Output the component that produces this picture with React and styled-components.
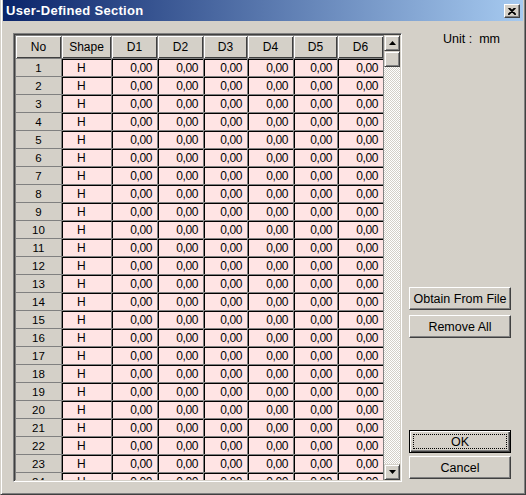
import styled, { createGlobalStyle } from 'styled-components'

const GlobalStyle = createGlobalStyle`
  html, body { margin: 0; padding: 0; background: #d4d0c8; }
  body { font-family: "Liberation Sans", Arial, sans-serif; font-size: 12px; color: #000; }
`

const Window = styled.div`
  box-sizing: border-box;
  width: 526px;
  height: 495px;
  display: flex;
  flex-direction: column;
  background: #d4d0c8;
  border: 1px solid;
  border-color: #d4d0c8 #404040 #404040 #d4d0c8;
  border-top: 0;
  box-shadow: inset 1px 0 #fff, inset -1px -1px #808080;
  padding: 0 2px 2px 2px;
  overflow: hidden;
`
const TitleBar = styled.div`
  height: 21px;
  flex: none;
  display: flex;
  align-items: center;
  justify-content: space-between;
  padding: 0 3px 0 3px;
  background: linear-gradient(to right, #0a246a, #a6caf0);
`
const Title = styled.span`
  color: #fff;
  font-weight: bold;
  font-size: 13px;
  letter-spacing: 0.3px;
`
const CloseButton = styled.div`
  box-sizing: border-box;
  width: 16px;
  height: 14px;
  margin-top: 1px;
  display: flex;
  align-items: center;
  justify-content: center;
  background: #d4d0c8;
  border: 1px solid;
  border-color: #fff #404040 #404040 #fff;
  box-shadow: inset -1px -1px #808080;
`
const Body = styled.div`
  flex: 1;
  display: flex;
  padding: 12px 12px 10px 10px;
  min-height: 0;
`
const Frame = styled.div`
  box-sizing: border-box;
  width: 389px;
  height: 449px;
  display: flex;
  padding: 1px;
  border: 1px solid;
  border-color: #808080 #fff #fff #808080;
  box-shadow: inset 1px 1px #404040, inset -1px -1px #d4d0c8;
`
const GridArea = styled.div`
  flex: 1;
  overflow: hidden;
  background: #808080;
  padding: 1px 1px 0 1px;
`
const Table = styled.div`
  display: grid;
  grid-template-columns: 45px 49px 45px 45px 43px 45px 43px 45px;
  grid-template-rows: 22px;
  grid-auto-rows: 17px;
  gap: 1px;
`
const HeadCell = styled.div`
  display: flex;
  align-items: center;
  justify-content: center;
  background: #d4d0c8;
  box-shadow: inset 1px 1px #fff, inset -1px -1px #404040;
  font-size: 12px;
`
const NoCell = styled.div`
  display: flex;
  align-items: center;
  justify-content: center;
  background: #d4d0c8;
  font-size: 11.5px;
`
const EditCell = styled.div`
  box-sizing: border-box;
  display: flex;
  align-items: center;
  justify-content: ${p => (p.$left ? 'flex-start' : 'flex-end')};
  padding: ${p => (p.$left ? '0 0 0 14px' : '0 5px 0 0')};
  background: #ffe4e4;
  border-top: 1px solid #000;
  border-left: 1px solid #000;
  font-size: 12px;
  letter-spacing: ${p => (p.$left ? '0' : '-0.4px')};
`
const ScrollBar = styled.div`
  width: 16px;
  flex: none;
  display: flex;
  flex-direction: column;
  background: repeating-conic-gradient(#d4d0c8 0 25%, #fff 0 50%) 0 0 / 2px 2px;
`
const ScrollPart = styled.div`
  box-sizing: border-box;
  width: 16px;
  height: 16px;
  display: flex;
  align-items: center;
  justify-content: center;
  background: #d4d0c8;
  border: 1px solid;
  border-color: #d4d0c8 #404040 #404040 #d4d0c8;
  box-shadow: inset 1px 1px #fff, inset -1px -1px #808080;
`
const Track = styled.div`
  flex: 1;
`
const SidePanel = styled.div`
  width: 102px;
  margin-left: 7px;
  display: flex;
  flex-direction: column;
  padding-bottom: 3px;
`
const UnitLabel = styled.div`
  text-align: right;
  padding-right: 11px;
  line-height: 12px;
  font-size: 12.5px;
`
const Button = styled.div`
  box-sizing: border-box;
  height: 23px;
  display: flex;
  align-items: center;
  justify-content: center;
  margin-top: ${p => p.$gap || '0'};
  background: #d4d0c8;
  border: 1px solid;
  border-color: #fff #404040 #404040 #fff;
  box-shadow: inset -1px -1px #808080;
  font-size: 12.5px;
`
const DefaultButton = styled(Button)`
  padding: 3px;
  border-color: #000;
  box-shadow: inset 1px 1px #fff, inset -1px -1px #404040, inset -2px -2px #808080;
`
const FocusRing = styled.span`
  flex: 1;
  align-self: stretch;
  display: flex;
  align-items: center;
  justify-content: center;
  border: 1px dotted #000;
`

const heads = ['No', 'Shape', 'D1', 'D2', 'D3', 'D4', 'D5', 'D6']
const rows = Array.from({ length: 24 }, (_, i) => i + 1)

const Arrow = ({ down }) => (
  <svg width="7" height="4" viewBox="0 0 7 4">
    <polygon points={down ? '0,0 7,0 3.5,4' : '0,4 7,4 3.5,0'} fill="#000" />
  </svg>
)

export default function App() {
  return (
    <>
      <GlobalStyle />
      <Window>
        <TitleBar>
          <Title>User-Defined Section</Title>
          <CloseButton>
            <svg width="8" height="7" viewBox="0 0 8 7">
              <path d="M0.5 0 L7.5 7 M7.5 0 L0.5 7 M1.5 0 L8 6.5 M6.5 0 L0 6.5" stroke="#000" strokeWidth="1.2" />
            </svg>
          </CloseButton>
        </TitleBar>
        <Body>
          <Frame>
            <GridArea>
              <Table>
                {heads.map(h => <HeadCell key={h}>{h}</HeadCell>)}
                {rows.map(n => [
                  <NoCell key={'n' + n}>{n}</NoCell>,
                  <EditCell key={'s' + n} $left>H</EditCell>,
                  ...[1, 2, 3, 4, 5, 6].map(d => <EditCell key={n + '-' + d}>0,00</EditCell>),
                ])}
              </Table>
            </GridArea>
            <ScrollBar>
              <ScrollPart><Arrow /></ScrollPart>
              <ScrollPart />
              <Track />
              <ScrollPart><Arrow down /></ScrollPart>
            </ScrollBar>
          </Frame>
          <SidePanel>
            <UnitLabel>Unit :&nbsp; mm</UnitLabel>
            <Button $gap="242px">Obtain From File</Button>
            <Button $gap="5px">Remove All</Button>
            <DefaultButton $gap="auto"><FocusRing>OK</FocusRing></DefaultButton>
            <Button $gap="3px">Cancel</Button>
          </SidePanel>
        </Body>
      </Window>
    </>
  )
}
